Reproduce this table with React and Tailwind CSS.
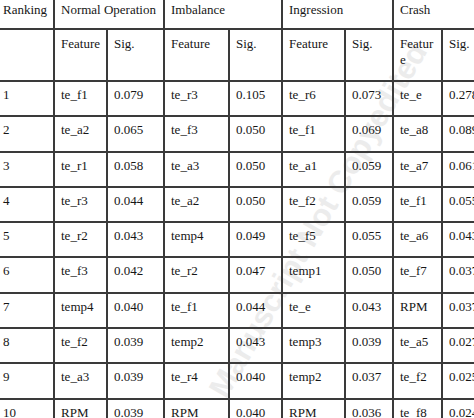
import React from "react";

const rows = [
  ["1", "te_f1", "0.079", "te_r3", "0.105", "te_r6", "0.073", "te_e", "0.278"],
  ["2", "te_a2", "0.065", "te_f3", "0.050", "te_f1", "0.069", "te_a8", "0.089"],
  ["3", "te_r1", "0.058", "te_a3", "0.050", "te_a1", "0.059", "te_a7", "0.061"],
  ["4", "te_r3", "0.044", "te_a2", "0.050", "te_f2", "0.059", "te_f1", "0.055"],
  ["5", "te_r2", "0.043", "temp4", "0.049", "te_f5", "0.055", "te_a6", "0.043"],
  ["6", "te_f3", "0.042", "te_r2", "0.047", "temp1", "0.050", "te_f7", "0.037"],
  ["7", "temp4", "0.040", "te_f1", "0.044", "te_e", "0.043", "RPM", "0.037"],
  ["8", "te_f2", "0.039", "temp2", "0.043", "temp3", "0.039", "te_a5", "0.027"],
  ["9", "te_a3", "0.039", "te_r4", "0.040", "temp2", "0.037", "te_f2", "0.025"],
  ["10", "RPM", "0.039", "RPM", "0.040", "RPM", "0.036", "te_f8", "0.024"],
];

const cell = "border-r-2 border-b-2 border-[#3a3a3a] pl-[6px] pt-[5px] whitespace-nowrap";

export default function App() {
  return (
    <div
      className="relative w-[474px] h-[418px] overflow-hidden bg-white text-[#161616] text-[13px] leading-[15px]"
      style={{ fontFamily: '"Liberation Serif", "Times New Roman", serif' }}
    >
      {/* watermark sits under the table */}
      <div
        className="pointer-events-none absolute left-[318px] top-[220px] -translate-x-1/2 -translate-y-1/2 -rotate-[60deg] whitespace-nowrap text-[31px] font-bold text-[#ececec]"
        style={{ fontFamily: '"Liberation Sans", Arial, sans-serif' }}
      >
        Manuscript Not Copyedited
      </div>

      <div className="relative -mt-[5px] -ml-[5px] grid grid-cols-[58px_53px_57px_65px_53px_63px_48px_49px_60px] grid-rows-[33px_52px_repeat(10,35.3px)] border-t-2 border-l-2 border-[#3a3a3a]">
        <div className={cell + " pl-[4px]"}>Ranking</div>
        <div className={cell + " col-span-2"}>Normal Operation</div>
        <div className={cell + " col-span-2"}>Imbalance</div>
        <div className={cell + " col-span-2"}>Ingression</div>
        <div className={cell + " col-span-2"}>Crash</div>

        <div className={cell}></div>
        <div className={cell + " pt-[6px]"}>Feature</div>
        <div className={cell + " pt-[6px]"}>Sig.</div>
        <div className={cell + " pt-[6px]"}>Feature</div>
        <div className={cell + " pt-[6px]"}>Sig.</div>
        <div className={cell + " pt-[6px]"}>Feature</div>
        <div className={cell + " pt-[6px]"}>Sig.</div>
        <div className={cell + " pt-[6px] leading-[16px]"}>
          Featur
          <br />e
        </div>
        <div className={cell + " pt-[6px]"}>Sig.</div>

        {rows.map((r) =>
          r.map((v, i) => (
            <div key={r[0] + "-" + i} className={cell}>
              {v}
            </div>
          ))
        )}
      </div>
    </div>
  );
}
